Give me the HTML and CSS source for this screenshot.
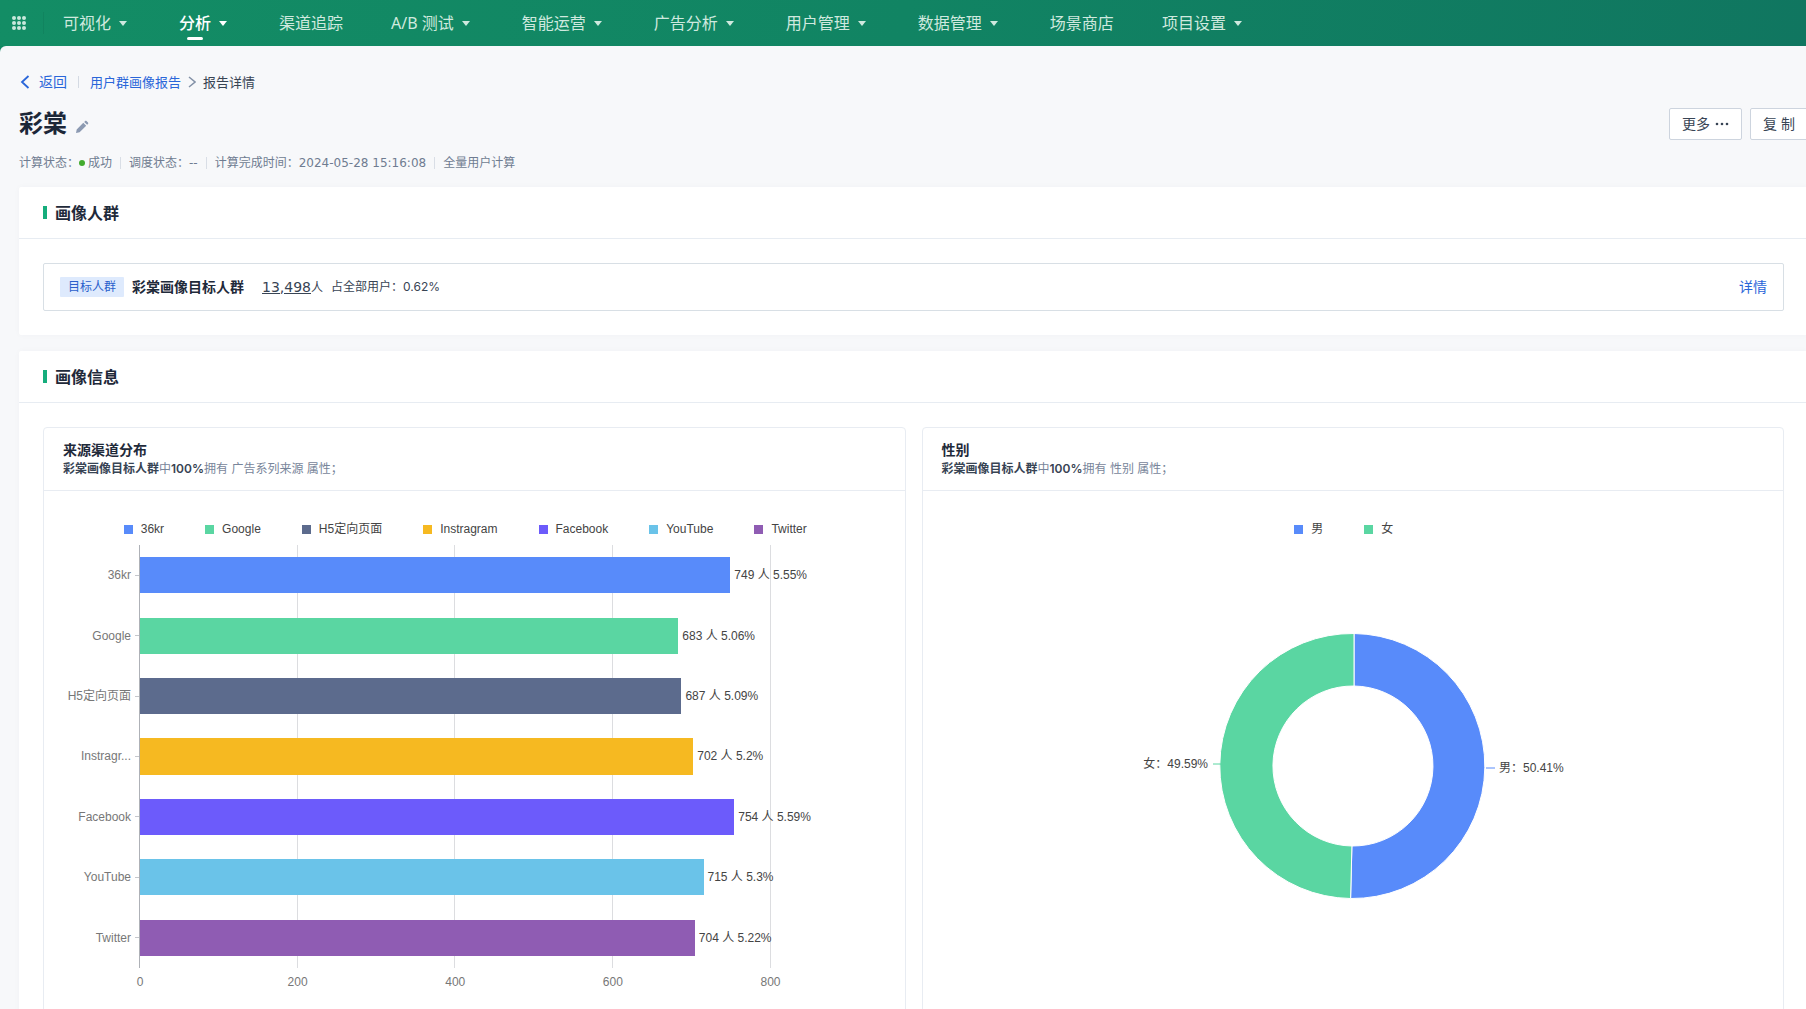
FILE: index.html
```html
<!DOCTYPE html>
<html lang="zh-CN">
<head>
    <meta charset="UTF-8">
    <meta name="viewport" content="width=device-width, initial-scale=1.0">
    <title>彩棠 - 报告详情</title>
    <link rel="stylesheet" href="styles.css">
</head>
<body>
    <header class="topbar">
        <button class="apps" aria-label="应用">
            <svg width="14" height="14" viewBox="0 0 14 14" fill="currentColor">
                <circle cx="2" cy="2" r="2"/><circle cx="7" cy="2" r="2"/><circle cx="12" cy="2" r="2"/>
                <circle cx="2" cy="7" r="2"/><circle cx="7" cy="7" r="2"/><circle cx="12" cy="7" r="2"/>
                <circle cx="2" cy="12" r="2"/><circle cx="7" cy="12" r="2"/><circle cx="12" cy="12" r="2"/>
            </svg>
        </button>
        <nav class="nav">
            <a href="#" class="has-menu">可视化</a>
            <a href="#" class="has-menu active">分析</a>
            <a href="#">渠道追踪</a>
            <a href="#" class="has-menu">A/B 测试</a>
            <a href="#" class="has-menu">智能运营</a>
            <a href="#" class="has-menu">广告分析</a>
            <a href="#" class="has-menu">用户管理</a>
            <a href="#" class="has-menu">数据管理</a>
            <a href="#">场景商店</a>
            <a href="#" class="has-menu">项目设置</a>
        </nav>
    </header>

    <main class="page">
        <!-- 面包屑 -->
        <div class="breadcrumb">
            <a href="#" class="back">
                <svg width="12" height="14" viewBox="0 0 12 14" fill="none" stroke="currentColor" stroke-width="1.8"><path d="M9.500 1 3 7l6.500 6"/></svg>
                返回
            </a>
            <span class="split"></span>
            <a href="#">用户群画像报告</a>
            <svg class="arrow" width="8" height="12" viewBox="0 0 8 12" fill="none" stroke="currentColor" stroke-width="1.500"><path d="M1 1l6 5-6 5"/></svg>
            <span>报告详情</span>
        </div>

        <div class="title-row">
            <h1>彩棠</h1>
            <button class="edit" aria-label="编辑">
                <svg width="14" height="14" viewBox="0 0 14 14" fill="currentColor"><path d="M1 13l.7-3.600L8.300 2.800l2.900 2.900-6.600 6.600zM9.200 1.900l.9-.9c.4-.4 1-.4 1.400 0L13 2.500c.4.4.4 1 0 1.400l-.9.9z"/></svg>
            </button>
            <div class="actions">
                <button class="btn">更多
                    <svg width="14" height="4" viewBox="0 0 14 4" fill="currentColor"><circle cx="2" cy="2" r="1.300"/><circle cx="7" cy="2" r="1.300"/><circle cx="12" cy="2" r="1.300"/></svg>
                </button>
                <button class="btn">复 制</button>
            </div>
        </div>

        <div class="status">
            <span>计算状态：<i class="dot"></i>成功</span>
            <span>调度状态：--</span>
            <span>计算完成时间：2024-05-28 15:16:08</span>
            <span>全量用户计算</span>
        </div>

        <!-- 画像人群 -->
        <section class="card">
            <h2>画像人群</h2>
            <div class="card-body">
                <div class="crowd">
                    <span class="tag">目标人群</span>
                    <strong>彩棠画像目标人群</strong>
                    <span class="count"><a href="#">13,498</a>人</span>
                    <span class="ratio">占全部用户：0.62%</span>
                    <a href="#" class="detail">详情</a>
                </div>
            </div>
        </section>

        <!-- 画像信息 -->
        <section class="card">
            <h2>画像信息</h2>
            <div class="card-body panels">
                <article class="panel">
                    <header>
                        <h3>来源渠道分布</h3>
                        <p><b>彩棠画像目标人群</b>中<b>100%</b>拥有 广告系列来源 属性；</p>
                    </header>
                    <div class="chart">
                        <ul class="legend">
                            <li class="blue">36kr</li>
                            <li class="green">Google</li>
                            <li class="slate">H5定向页面</li>
                            <li class="yellow">Instragram</li>
                            <li class="indigo">Facebook</li>
                            <li class="cyan">YouTube</li>
                            <li class="violet">Twitter</li>
                        </ul>
                        <div class="bar-chart">
                            <div class="y-axis">
                                <span>36kr</span>
                                <span>Google</span>
                                <span>H5定向页面</span>
                                <span>Instragr...</span>
                                <span>Facebook</span>
                                <span>YouTube</span>
                                <span>Twitter</span>
                            </div>
                            <div class="plot">
                                <div class="grid"><i></i><i></i><i></i><i></i></div>
                                <div class="bars">
                                    <div class="row"><div class="bar blue" style="width: 93.625%"></div><span>749 人 5.55%</span></div>
                                    <div class="row"><div class="bar green" style="width: 85.375%"></div><span>683 人 5.06%</span></div>
                                    <div class="row"><div class="bar slate" style="width: 85.875%"></div><span>687 人 5.09%</span></div>
                                    <div class="row"><div class="bar yellow" style="width: 87.75%"></div><span>702 人 5.2%</span></div>
                                    <div class="row"><div class="bar indigo" style="width: 94.25%"></div><span>754 人 5.59%</span></div>
                                    <div class="row"><div class="bar cyan" style="width: 89.375%"></div><span>715 人 5.3%</span></div>
                                    <div class="row"><div class="bar violet" style="width: 88%"></div><span>704 人 5.22%</span></div>
                                </div>
                                <div class="x-axis"><span>0</span><span>200</span><span>400</span><span>600</span><span>800</span></div>
                            </div>
                        </div>
                    </div>
                </article>

                <article class="panel">
                    <header>
                        <h3>性别</h3>
                        <p><b>彩棠画像目标人群</b>中<b>100%</b>拥有 性别 属性；</p>
                    </header>
                    <div class="chart">
                        <ul class="legend">
                            <li class="blue">男</li>
                            <li class="green">女</li>
                        </ul>
                        <svg class="donut" width="460" height="360" viewBox="-231 -180 460 360">
                            <path class="male" d="M0 -132.500A132.500 132.500 0 1 1 -3.400 132.500L-2.100 80A80 80 0 1 0 0 -80Z"/>
                            <path class="female" d="M-3.400 132.500A132.500 132.500 0 0 1 0 -132.500L0 -80A80 80 0 0 0 -2.100 80Z"/>
                            <path class="male-line" d="M132 2h9"/>
                            <path class="female-line" d="M-132 -2h-9"/>
                            <text x="145" y="6">男：50.41%</text>
                            <text x="-146" y="2" text-anchor="end">女：49.59%</text>
                        </svg>
                    </div>
                </article>
            </div>
        </section>
    </main>
</body>
</html>
```
FILE: styles.css
```css
* {
    box-sizing: border-box;
}

body {
    margin: 0;
    height: 100vh;
    overflow: hidden;
    background: #118762;
    color: #384454;
    font-family: Inter, "Noto Sans CJK SC", sans-serif;
    font-size: 12px;
    line-height: 20px;
}

a {
    color: #2a66d9;
    text-decoration: none;
}

button {
    font-family: inherit;
    line-height: inherit;
    cursor: pointer;
}

h1, h2, h3, p, ul {
    margin: 0;
    padding: 0;
}

/* 顶部导航 */
.topbar {
    display: flex;
    align-items: center;
    height: 46px;
    background: linear-gradient(100deg, #138d65, #118463 50%, #107660);
}

.apps {
    display: flex;
    padding: 4px 17px 4px 12px;
    border: 0;
    border-right: 1px solid rgba(0, 0, 0, 0.06);
    background: none;
    color: #c9e8dc;
}

.nav {
    display: flex;
    gap: 48px;
    margin-left: 19px;
}

.nav a {
    position: relative;
    display: flex;
    align-items: center;
    color: #cfe9df;
    font-family: "Noto Sans", "Noto Sans CJK SC", sans-serif;
    font-size: 16px;
    line-height: 46px;
    white-space: nowrap;
}

.nav .has-menu::after {
    content: "";
    margin: 0 4px 0 8px;
    border: 4px solid transparent;
    border-top: 5px solid currentColor;
    border-bottom: 0;
}

.nav .active {
    color: #fff;
    font-weight: 500;
}

.nav .active::before {
    content: "";
    position: absolute;
    left: 8px;
    bottom: 6px;
    width: 16px;
    height: 3px;
    border-radius: 2px;
    background: #fff;
}

/* 页面 */
.page {
    margin-right: -2px;
    padding: 23px 0 0 19px;
    background: #f7f8fa;
    border-top-left-radius: 6px;
}

.breadcrumb {
    display: flex;
    align-items: center;
    height: 26px;
    font-size: 13px;
}

.back {
    display: flex;
    align-items: center;
    gap: 8px;
    font-size: 14px;
}

.split {
    width: 1px;
    height: 12px;
    margin: 0 11px;
    background: #d4dae3;
}

.arrow {
    margin: 0 7px;
    color: #8391a7;
}

.title-row {
    display: flex;
    align-items: center;
    height: 54px;
    margin-top: 2px;
}

h1 {
    color: #1c2738;
    font-size: 24px;
    line-height: 32px;
}

.edit {
    display: flex;
    margin: 6px 0 0 8px;
    padding: 0;
    border: 0;
    background: none;
    color: #8c9ab2;
}

.actions {
    display: flex;
    gap: 8px;
    margin-left: auto;
}

.btn {
    display: flex;
    align-items: center;
    gap: 5px;
    height: 32px;
    padding: 0 12px;
    border: 1px solid #cdd4de;
    border-radius: 2px;
    background: #fff;
    color: #384454;
    font-size: 14px;
    white-space: nowrap;
}

.status {
    display: flex;
    align-items: center;
    height: 24px;
    color: #6f7c91;
    font-family: "DejaVu Sans", "Noto Sans CJK SC", sans-serif;
}

.status span {
    display: flex;
    align-items: center;
    line-height: 12px;
}

.status span + span {
    margin-left: 8px;
    padding-left: 8px;
    border-left: 1px solid #d9dee6;
}

.dot {
    width: 6px;
    height: 6px;
    margin-right: 3px;
    border-radius: 50%;
    background: #43ab2f;
}

/* 卡片 */
.card {
    margin-top: 12px;
    background: #fff;
    border-radius: 2px;
    box-shadow: 0 0 6px rgba(40, 60, 90, 0.03);
}

.card + .card {
    margin-top: 16px;
}

.card h2 {
    display: flex;
    align-items: center;
    height: 52px;
    padding-left: 24px;
    border-bottom: 1px solid #e7ecf2;
    color: #1f2a3a;
    font-size: 16px;
    font-weight: 600;
}

.card h2::before {
    content: "";
    width: 4px;
    height: 13px;
    margin-right: 8px;
    background: #16ad7c;
}

.card-body {
    padding: 24px;
}

.crowd {
    display: flex;
    align-items: center;
    height: 48px;
    padding: 0 16px;
    border: 1px solid #d8dfe5;
    border-radius: 2px;
}

.tag {
    padding: 0 8px;
    border-radius: 1px;
    background: #deeafd;
    color: #2a5fcc;
}

.crowd strong {
    margin: 0 18px 0 8px;
    color: #1f2a3a;
    font-size: 14px;
    font-weight: 600;
}

.count a {
    color: #384454;
    font-family: "DejaVu Sans", sans-serif;
    font-size: 14px;
    text-decoration: underline;
}

.ratio {
    margin-left: 8px;
}

.detail {
    margin-left: auto;
    font-size: 14px;
}

/* 图表面板 */
.panels {
    display: grid;
    grid-template-columns: 1fr 1fr;
    gap: 16px;
}

.panel {
    border: 1px solid #e8ecf2;
    border-radius: 4px;
}

.panel header {
    height: 63px;
    padding: 13px 19px;
    border-bottom: 1px solid #e8ecf2;
}

.panel h3 {
    color: #1f2a3a;
    font-size: 14px;
    font-weight: 600;
    line-height: 18px;
}

.panel p {
    color: #78859a;
}

.panel b {
    color: #384454;
    font-weight: 600;
}

.chart {
    padding: 28px 0 60px;
    font-family: "Liberation Sans", "Noto Sans CJK SC", sans-serif;
}

.legend {
    display: flex;
    justify-content: center;
    gap: 41px;
    padding-right: 18px;
    list-style: none;
}

.legend li {
    display: flex;
    align-items: center;
    gap: 8px;
    height: 20px;
    color: #444;
}

.legend li::before {
    content: "";
    width: 9px;
    height: 9px;
    background: var(--color);
}

.blue { --color: #588bfa; }
.green { --color: #5ad6a2; }
.slate { --color: #5c6b8d; }
.yellow { --color: #f6b921; }
.indigo { --color: #6c5bfb; }
.cyan { --color: #6ac3e9; }
.violet { --color: #8f5cb3; }

.bar-chart {
    display: grid;
    grid-template-columns: 95px 1fr;
    height: 423px;
    margin: 6px 134px 0 0;
}

.y-axis, .bars {
    display: flex;
    flex-direction: column;
}

.y-axis span {
    display: flex;
    flex: 1;
    align-items: center;
    justify-content: flex-end;
    gap: 4px;
    color: #777;
}

.y-axis span::after {
    content: "";
    width: 4px;
    height: 1px;
    background: #c4c7cc;
}

.plot {
    position: relative;
    border-left: 1px solid #aeb1b7;
}

/* 竖向网格线在柱子下面 */
.grid {
    position: absolute;
    inset: 0;
    display: flex;
}

.grid i {
    flex: 1;
    border-right: 1px solid #dcdde0;
}

.bars {
    position: relative;
    height: 100%;
}

.row {
    display: flex;
    flex: 1;
    align-items: center;
    gap: 4px;
    color: #444;
    white-space: nowrap;
}

.bar {
    flex: none;
    height: 60%;
    background: var(--color);
}

.x-axis {
    display: flex;
    margin: 4px -12.5% 0;
    color: #777;
    text-align: center;
}

.x-axis span {
    flex: 1;
}

.donut {
    display: block;
    margin: 47px auto 0;
    fill: #444;
    font-size: 12px;
}

.male, .female {
    stroke: #fff;
    stroke-width: 1;
}

.male {
    fill: #588bfa;
}

.female {
    fill: #5ad6a2;
}

.male-line {
    stroke: #588bfa;
}

.female-line {
    stroke: #5ad6a2;
}
```
